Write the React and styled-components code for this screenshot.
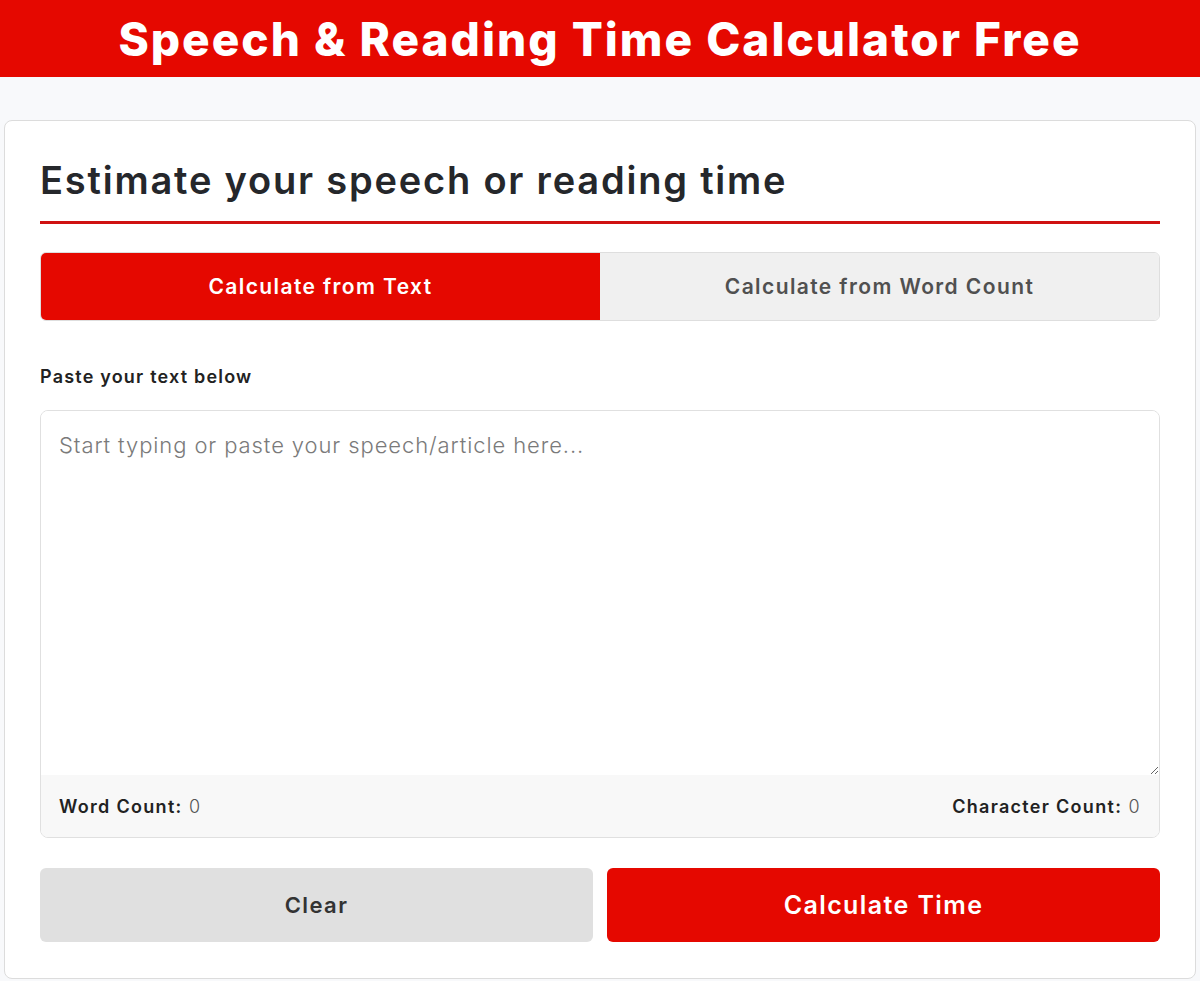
import React, { useState } from 'react'
import styled, { createGlobalStyle } from 'styled-components'

const GlobalStyle = createGlobalStyle`
  html, body {
    margin: 0;
    padding: 0;
    background: #f8f9fb;
    font-family: Inter, "Open Sans", "Liberation Sans", sans-serif;
  }
  * { box-sizing: border-box; }
`

function countWords(text) {
  const t = text.trim()
  return t ? t.split(/\s+/).length : 0
}

export default function App() {
  const [mode, setMode] = useState('text')
  const [text, setText] = useState('')

  return (
    <>
      <GlobalStyle />
      <Header>
        <Title>Speech &amp; Reading Time Calculator Free</Title>
      </Header>
      <Card>
        <Heading>Estimate your speech or reading time</Heading>
        <Tabs>
          <Tab active={mode === 'text'} onClick={() => setMode('text')}>
            Calculate from Text
          </Tab>
          <Tab active={mode === 'count'} onClick={() => setMode('count')}>
            Calculate from Word Count
          </Tab>
        </Tabs>
        <Label htmlFor="speech">Paste your text below</Label>
        <InputBox>
          <TextArea
            id="speech"
            value={text}
            onChange={(e) => setText(e.target.value)}
            placeholder="Start typing or paste your speech/article here..."
          />
          <Stats>
            <Stat>
              <b>Word Count:</b> {countWords(text)}
            </Stat>
            <Stat>
              <b>Character Count:</b> {text.length}
            </Stat>
          </Stats>
        </InputBox>
        <Actions>
          <Button onClick={() => setText('')}>Clear</Button>
          <Button primary>Calculate Time</Button>
        </Actions>
      </Card>
    </>
  )
}

const Header = styled.header`
  height: 77px;
  background: #e50800;
  display: flex;
  align-items: center;
  justify-content: center;
`

const Title = styled.h1`
  margin: 0;
  color: #fff;
  font-size: 46px;
  font-weight: 800;
  letter-spacing: 2px;
  line-height: 1;
`

const Card = styled.main`
  margin: 43px 4px 4px;
  background: #fff;
  border: 1px solid #dcdcdc;
  border-radius: 8px;
  padding: 36px 35px 36px;
`

const Heading = styled.h2`
  margin: 0;
  padding-bottom: 17px;
  border-bottom: 3px solid #cf1111;
  color: #25272b;
  font-size: 38px;
  font-weight: 600;
  letter-spacing: 1.8px;
  line-height: 1.24;
`

const Tabs = styled.div`
  margin-top: 28px;
  display: grid;
  grid-template-columns: 1fr 1fr;
  height: 69px;
  border: 1px solid #dedede;
  border-radius: 6px;
  overflow: hidden;
`

const Tab = styled.button`
  border: none;
  font: inherit;
  font-size: 21px;
  font-weight: 600;
  letter-spacing: 1.4px;
  cursor: pointer;
  background: ${(p) => (p.active ? '#e50800' : '#f0f0f0')};
  color: ${(p) => (p.active ? '#fff' : '#505050')};
`

const Label = styled.label`
  display: block;
  margin-top: 44px;
  color: #222;
  font-size: 18px;
  font-weight: 600;
  letter-spacing: 1.2px;
  line-height: 24px;
`

const InputBox = styled.div`
  margin-top: 21px;
  border: 1px solid #e0e0e0;
  border-radius: 8px;
  overflow: hidden;
`

const TextArea = styled.textarea`
  display: block;
  width: 100%;
  height: 364px;
  border: none;
  outline: none;
  resize: vertical;
  padding: 21px 18px;
  font-family: inherit;
  font-size: 22px;
  font-weight: 300;
  letter-spacing: 0.9px;
  color: #333;
  background: #fff;

  &::placeholder {
    color: #7a7a7a;
  }
`

const Stats = styled.div`
  height: 62px;
  background: #f8f8f8;
  display: flex;
  align-items: center;
  justify-content: space-between;
  padding: 0 18px;
`

const Stat = styled.span`
  font-size: 18px;
  color: #555;
  font-weight: 300;
  letter-spacing: 1.3px;

  b {
    color: #222;
    font-weight: 600;
  }
`

const Actions = styled.div`
  margin-top: 30px;
  display: grid;
  grid-template-columns: 1fr 1fr;
  gap: 14px;
`

const Button = styled.button`
  height: 74px;
  border: none;
  border-radius: 6px;
  font-family: inherit;
  font-weight: 600;
  cursor: pointer;
  font-size: ${(p) => (p.primary ? '25px' : '22px')};
  letter-spacing: 1.4px;
  background: ${(p) => (p.primary ? '#e50800' : '#e0e0e0')};
  color: ${(p) => (p.primary ? '#fff' : '#333')};
`
